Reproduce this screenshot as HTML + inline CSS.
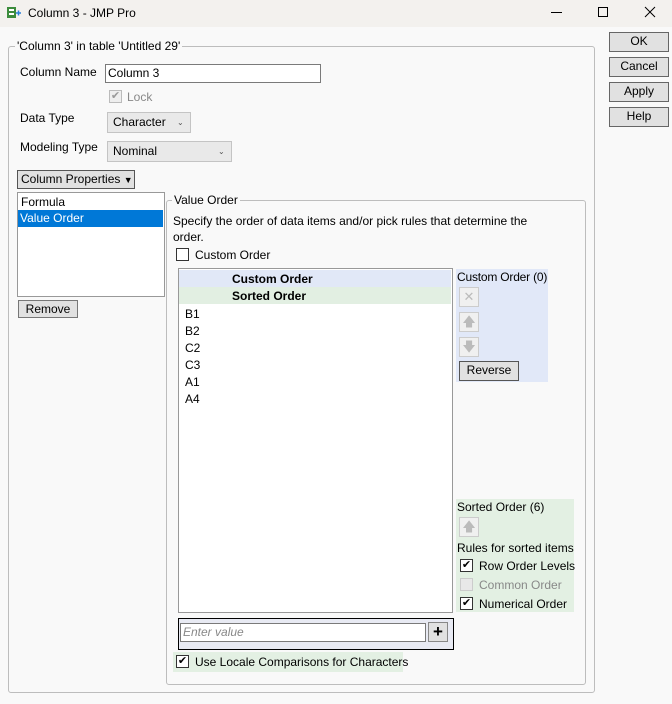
<!DOCTYPE html>
<html><head><style>
*{box-sizing:border-box;margin:0;padding:0}
body{width:672px;height:704px;background:#f9f9f9;font-family:"Liberation Sans",sans-serif;font-size:12px;color:#000;position:relative;overflow:hidden}
.a{position:absolute;white-space:nowrap}
.t{position:absolute;white-space:nowrap;line-height:14px}
.btn{position:absolute;background:#e1e1e1;border:1px solid #adadad;text-align:center;line-height:17px}
.box{position:absolute;background:#fff;border:1px solid #7a7a7a}
.cb{position:absolute;width:13px;height:13px;border:1px solid #333;background:#fff;font-size:11px;line-height:11px;text-align:center}
.grp{position:absolute;border:1px solid #bdbdbd;border-radius:3px}
.lbl{position:absolute;background:#f9f9f9;padding:0 2px;line-height:14px}
.ib{position:absolute;width:20px;height:20px;border:1px solid #ccc;background:#f0f0f0;color:#bbb;text-align:center;line-height:18px;font-size:13px}
</style></head><body>
<div class="a" style="left:0;top:0;width:672px;height:27px;background:#f3f1ee"></div>
<svg class="a" style="left:6;top:5px;left:6px" width="16" height="16"><rect x="1" y="2" width="9" height="11" fill="#3c8c3c"/><rect x="3" y="4" width="5" height="2" fill="#fff"/><rect x="3" y="8" width="5" height="2" fill="#fff"/><path d="M10 8h5M12.5 5.5v5" stroke="#2a7fd8" stroke-width="1.5"/></svg>
<div class="t" style="left:28px;top:6px">Column 3 - JMP Pro</div>
<div class="a" style="left:551px;top:12px;width:11px;height:1px;background:#000"></div>
<div class="a" style="left:598px;top:7px;width:10px;height:10px;border:1px solid #000"></div>
<svg class="a" style="left:644px;top:6px" width="12" height="12"><path d="M1 1L11 11M11 1L1 11" stroke="#000"/></svg>

<div class="grp" style="left:8px;top:46px;width:587px;height:647px"></div>
<div class="lbl" style="left:15px;top:39px">'Column 3' in table 'Untitled 29'</div>
<div class="t" style="left:20px;top:65px">Column Name</div>
<div class="box" style="left:105px;top:64px;width:216px;height:19px;padding-left:2px;line-height:16px">Column 3</div>
<div class="cb" style="left:109px;top:90px;border-color:#bbb;background:#eee;color:#999">✔</div>
<div class="t" style="left:127px;top:90px;color:#888">Lock</div>
<div class="t" style="left:20px;top:111px">Data Type</div>
<div class="btn" style="left:107px;top:112px;width:84px;height:21px;text-align:left;padding-left:5px;line-height:19px;background:#e9e9e9;border-color:#c4c4c4">Character<span style="position:absolute;left:69px;font-size:8px;color:#555">&#8964;</span></div>
<div class="t" style="left:20px;top:140px">Modeling Type</div>
<div class="btn" style="left:107px;top:141px;width:125px;height:21px;text-align:left;padding-left:5px;line-height:19px;background:#e9e9e9;border-color:#c4c4c4">Nominal<span style="position:absolute;left:110px;font-size:8px;color:#555">&#8964;</span></div>
<div class="btn" style="left:17px;top:170px;width:118px;height:19px;border-color:#555;text-align:left;padding-left:3px">Column Properties <span style="font-size:9px">&#9660;</span></div>
<div class="box" style="left:17px;top:192px;width:148px;height:105px;border-color:#999"></div>
<div class="t" style="left:21px;top:195px">Formula</div>
<div class="a" style="left:18px;top:210px;width:145px;height:17px;background:#0078d7"></div>
<div class="t" style="left:20px;top:211px;color:#fff">Value Order</div>
<div class="btn" style="left:18px;top:300px;width:60px;height:18px;border-color:#777;line-height:16px">Remove</div>

<div class="grp" style="left:166px;top:200px;width:420px;height:485px"></div>
<div class="lbl" style="left:172px;top:193px">Value Order</div>
<div class="t" style="left:173px;top:214px">Specify the order of data items and/or pick rules that determine the</div>
<div class="t" style="left:173px;top:230px">order.</div>
<div class="cb" style="left:176px;top:248px"></div>
<div class="t" style="left:195px;top:248px">Custom Order</div>
<div class="box" style="left:178px;top:268px;width:275px;height:345px;border-color:#999"></div>
<div class="a" style="left:179px;top:270px;width:272px;height:17px;background:#e1e8f7"></div>
<div class="a" style="left:179px;top:287px;width:272px;height:17px;background:#e2efe2"></div>
<div class="t" style="left:232px;top:272px;font-weight:bold">Custom Order</div>
<div class="t" style="left:232px;top:289px;font-weight:bold">Sorted Order</div>
<div class="t" style="left:185px;top:306px;line-height:17px">B1<br>B2<br>C2<br>C3<br>A1<br>A4</div>

<div class="a" style="left:456px;top:269px;width:92px;height:113px;background:#e1e8f8"></div>
<div class="t" style="left:457px;top:270px;letter-spacing:-0.2px">Custom Order (0)</div>
<div class="ib" style="left:459px;top:287px">✕</div>
<div class="ib" style="left:459px;top:312px">&#129093;</div>
<div class="ib" style="left:459px;top:337px">&#129095;</div>
<div class="btn" style="left:459px;top:361px;width:60px;height:20px;border-color:#555">Reverse</div>

<div class="a" style="left:456px;top:499px;width:118px;height:113px;background:#e3f0e3"></div>
<div class="t" style="left:457px;top:500px">Sorted Order (6)</div>
<div class="ib" style="left:459px;top:517px">&#129093;</div>
<div class="t" style="left:457px;top:541px">Rules for sorted items</div>
<div class="cb" style="left:460px;top:559px">✔</div>
<div class="t" style="left:479px;top:559px">Row Order Levels</div>
<div class="cb" style="left:460px;top:578px;border-color:#ccc;background:#e8e8e8"></div>
<div class="t" style="left:479px;top:578px;color:#888">Common Order</div>
<div class="cb" style="left:460px;top:597px">✔</div>
<div class="t" style="left:479px;top:597px">Numerical Order</div>

<div class="a" style="left:178px;top:618px;width:276px;height:32px;border:1px solid #000;background:#e8eaf3"></div>
<div class="box" style="left:180px;top:623px;width:246px;height:19px;padding-left:2px;color:#888;font-style:italic;line-height:16px">Enter value</div>
<div class="btn" style="left:428px;top:622px;width:20px;height:20px;border-color:#888;font-weight:bold;font-size:17px;line-height:17px">+</div>
<div class="a" style="left:173px;top:652px;width:230px;height:20px;background:#e3f0e3"></div>
<div class="cb" style="left:176px;top:655px">✔</div>
<div class="t" style="left:195px;top:655px">Use Locale Comparisons for Characters</div>

<div class="btn" style="left:609px;top:32px;width:60px;height:20px;border-color:#666">OK</div>
<div class="btn" style="left:609px;top:57px;width:60px;height:20px;border-color:#666">Cancel</div>
<div class="btn" style="left:609px;top:82px;width:60px;height:20px;border-color:#666">Apply</div>
<div class="btn" style="left:609px;top:107px;width:60px;height:20px;border-color:#666">Help</div>
</body></html>
